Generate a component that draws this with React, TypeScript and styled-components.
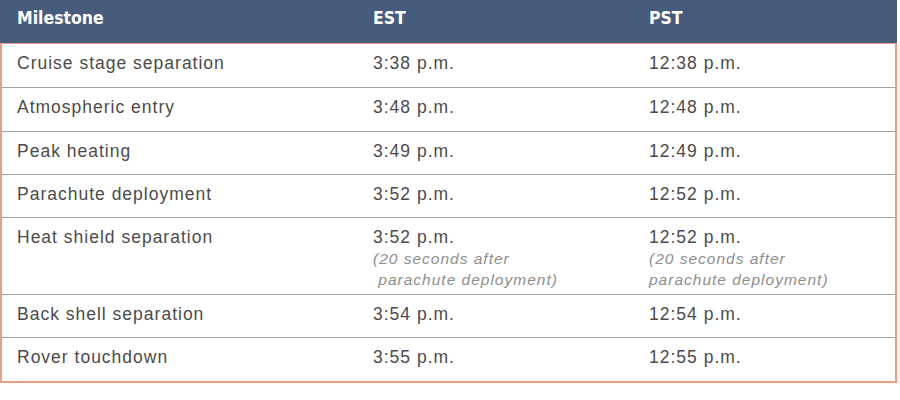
import React from "react";
import styled, { createGlobalStyle } from "styled-components";

const GlobalStyle = createGlobalStyle`
  html, body {
    margin: 0;
    padding: 0;
    background: #ffffff;
  }
  body {
    font-family: "Liberation Sans", Arial, sans-serif;
  }
`;

const Table = styled.div`
  width: 897px;
  box-sizing: border-box;
`;

const HeaderRow = styled.div`
  display: grid;
  grid-template-columns: 356px 276px 1fr;
  height: 44px;
  box-sizing: border-box;
  background: #475b7c;
  border-bottom: 1px solid #e99c86;
`;

const HeaderCell = styled.div`
  padding: 9px 0 0 17px;
  font-family: "DejaVu Sans Condensed", "DejaVu Sans", sans-serif;
  font-stretch: condensed;
  font-weight: 700;
  font-size: 17.5px;
  line-height: 18px;
  color: #ffffff;
`;

const Body = styled.div`
  border: 2px solid #e99c86;
  border-top: none;
  box-shadow: 0 1px 3px rgba(233, 156, 134, 0.45);
`;

const Row = styled.div`
  display: grid;
  grid-template-columns: 356px 276px 1fr;
  min-height: 43.3px;
  box-sizing: border-box;
  padding: 9px 0 4px;
  & + & {
    border-top: 1px solid #a3a3a3;
  }
`;

const Cell = styled.div`
  padding-left: 15px;
  display: flex;
  flex-direction: column;
`;

const Main = styled.span`
  font-size: 17.5px;
  line-height: 21px;
  letter-spacing: 1px;
  color: #4b4b4b;
`;

const Note = styled.span`
  font-size: 15.5px;
  line-height: 21px;
  letter-spacing: 1px;
  font-style: italic;
  color: #8e8e8e;
  white-space: pre;
`;

type Entry = {
  milestone: string;
  est: string;
  pst: string;
  estNote?: string[];
  pstNote?: string[];
};

const rows: Entry[] = [
  { milestone: "Cruise stage separation", est: "3:38 p.m.", pst: "12:38 p.m." },
  { milestone: "Atmospheric entry", est: "3:48 p.m.", pst: "12:48 p.m." },
  { milestone: "Peak heating", est: "3:49 p.m.", pst: "12:49 p.m." },
  { milestone: "Parachute deployment", est: "3:52 p.m.", pst: "12:52 p.m." },
  {
    milestone: "Heat shield separation",
    est: "3:52 p.m.",
    pst: "12:52 p.m.",
    estNote: ["(20 seconds after", "\u00a0parachute deployment)"],
    pstNote: ["(20 seconds after", "parachute deployment)"],
  },
  { milestone: "Back shell separation", est: "3:54 p.m.", pst: "12:54 p.m." },
  { milestone: "Rover touchdown", est: "3:55 p.m.", pst: "12:55 p.m." },
];

export default function App() {
  return (
    <>
      <GlobalStyle />
      <Table>
        <HeaderRow>
          <HeaderCell>Milestone</HeaderCell>
          <HeaderCell>EST</HeaderCell>
          <HeaderCell>PST</HeaderCell>
        </HeaderRow>
        <Body>
          {rows.map((r) => (
            <Row key={r.milestone}>
              <Cell>
                <Main>{r.milestone}</Main>
              </Cell>
              <Cell>
                <Main>{r.est}</Main>
                {r.estNote?.map((n) => (
                  <Note key={n}>{n}</Note>
                ))}
              </Cell>
              <Cell>
                <Main>{r.pst}</Main>
                {r.pstNote?.map((n) => (
                  <Note key={n}>{n}</Note>
                ))}
              </Cell>
            </Row>
          ))}
        </Body>
      </Table>
    </>
  );
}
